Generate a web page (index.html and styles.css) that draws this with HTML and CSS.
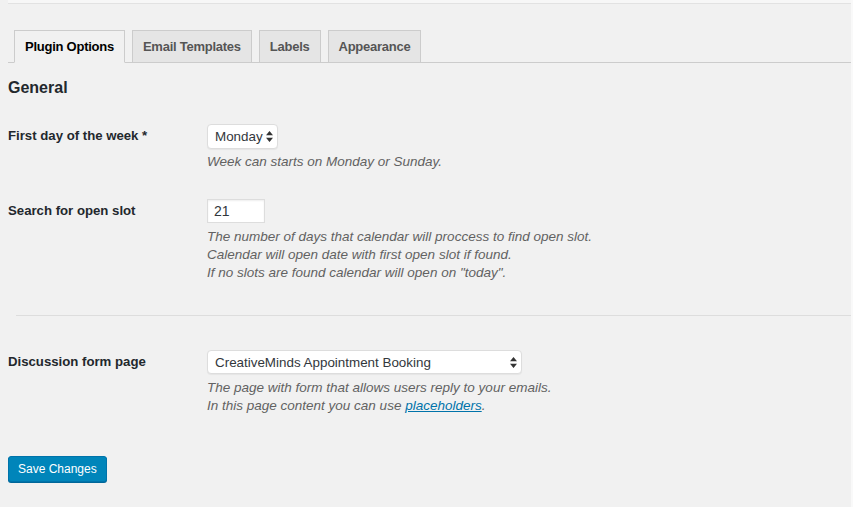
FILE: index.html
```html
<!DOCTYPE html>
<html>
<head>
<meta charset="utf-8">
<link rel="stylesheet" href="styles.css">
</head>
<body>
<div class="page">
  <div class="topbar"></div>
  <nav class="tabs">
    <span class="tab active">Plugin Options</span>
    <span class="tab">Email Templates</span>
    <span class="tab">Labels</span>
    <span class="tab">Appearance</span>
  </nav>
  <h2 class="section-title">General</h2>

  <div class="row row-first">
    <div class="label">First day of the week *</div>
    <div class="field">
      <div class="select select-small">
        <span>Monday</span>
        <svg class="arrows" width="7" height="11" viewBox="0 0 7 11"><path d="M3.5 0 L7 4.2 L0 4.2 Z M0 6.8 L7 6.8 L3.5 11 Z" fill="#333"/></svg>
      </div>
      <p class="description">Week can starts on Monday or Sunday.</p>
    </div>
  </div>

  <div class="row row-second">
    <div class="label">Search for open slot</div>
    <div class="field">
      <div class="input">21</div>
      <p class="description">The number of days that calendar will proccess to find open slot.<br>Calendar will open date with first open slot if found.<br>If no slots are found calendar will open on "today".</p>
    </div>
  </div>

  <div class="separator"></div>

  <div class="row row-third">
    <div class="label">Discussion form page</div>
    <div class="field">
      <div class="select select-wide">
        <span>CreativeMinds Appointment Booking</span>
        <svg class="arrows" width="7" height="11" viewBox="0 0 7 11"><path d="M3.5 0 L7 4.2 L0 4.2 Z M0 6.8 L7 6.8 L3.5 11 Z" fill="#333"/></svg>
      </div>
      <p class="description">The page with form that allows users reply to your emails.<br>In this page content you can use <a href="#" class="link">placeholders</a>.</p>
    </div>
  </div>

  <div class="actions">
    <button class="button-primary">Save Changes</button>
  </div>
</div>
</body>
</html>
```

FILE: styles.css
```css
html, body {
  margin: 0;
  padding: 0;
  background: #f1f1f1;
}
body {
  font-family: "Liberation Sans", Arial, sans-serif;
  color: #23282d;
  font-size: 14px;
}
.page {
  width: 851px;
  height: 507px;
  border-right: 2px solid #f9f9f9;
  overflow: hidden;
}
.topbar {
  margin-left: 8px;
  height: 3px;
  background: #f7f7f7;
  border-bottom: 1px solid #e2e2e2;
}
.tabs {
  display: flex;
  gap: 7px;
  margin-left: 8px;
  margin-top: 26px;
  padding-left: 6px;
  border-bottom: 1px solid #cccccc;
  height: 32px;
}
.tab {
  display: block;
  height: 23px;
  line-height: 23px;
  padding: 4px 10px;
  border: 1px solid #cccccc;
  background: #e5e5e5;
  color: #555555;
  font-weight: bold;
  font-size: 13px;
  letter-spacing: -0.25px;
}
.tab.active {
  background: #f1f1f1;
  color: #000000;
  border-bottom-color: #f1f1f1;
}
.section-title {
  margin: 15px 0 0 8px;
  font-size: 16px;
  line-height: 20px;
  font-weight: bold;
  color: #23282d;
}
.row {
  display: grid;
  grid-template-columns: 199px 1fr;
  margin-left: 8px;
}
.row-first { margin-top: 26px; }
.row-second { margin-top: 28px; }
.row-third { margin-top: 34px; }
.label {
  font-weight: bold;
  font-size: 13.2px;
  line-height: 24px;
  color: #23282d;
}
.field {
  display: flex;
  flex-direction: column;
  align-items: flex-start;
}
.select {
  box-sizing: border-box;
  height: 25px;
  display: flex;
  align-items: center;
  justify-content: space-between;
  background: #ffffff;
  border: 1px solid #dddddd;
  border-radius: 4px;
  box-shadow: 0 1px 1px rgba(0,0,0,0.05);
  padding: 0 4px 0 7px;
  font-size: 13.4px;
  color: #32373c;
}
.select-small { width: 71px; }
.select-wide { width: 315px; height: 24px; }
.arrows { flex: none; }
.input {
  box-sizing: border-box;
  width: 58px;
  height: 24px;
  line-height: 22px;
  padding: 0 6px;
  background: #ffffff;
  border: 1px solid #dddddd;
  box-shadow: inset 0 1px 2px rgba(0,0,0,0.07);
  font-size: 14px;
  color: #32373c;
}
.description {
  margin: 4px 0 0 0;
  font-style: italic;
  font-size: 13.5px;
  line-height: 18px;
  color: #626262;
}
.row-second .description,
.row-third .description { margin-top: 5px; }
.link {
  color: #0073aa;
  text-decoration: underline;
}
.separator {
  margin-left: 16px;
  margin-top: 33px;
  height: 0;
  border-top: 1px solid #dddddd;
}
.actions {
  margin: 41px 0 0 8px;
}
.button-primary {
  display: block;
  height: 26px;
  padding: 0 9px 1px;
  background: #0085ba;
  border: 1px solid #0073aa;
  border-radius: 3px;
  box-shadow: 0 1px 0 #006799;
  color: #ffffff;
  font-family: "Liberation Sans", Arial, sans-serif;
  font-size: 12px;
  cursor: pointer;
}
```
